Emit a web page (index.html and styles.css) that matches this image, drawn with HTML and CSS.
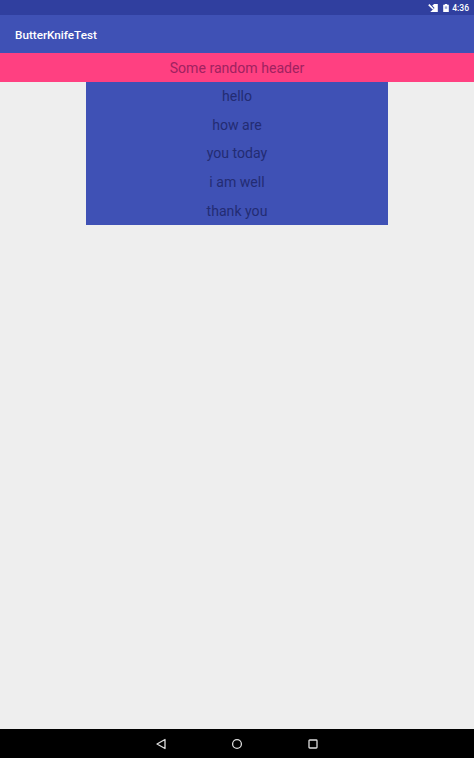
FILE: index.html
```html
<!DOCTYPE html>
<html lang="en">
<head>
    <meta charset="UTF-8">
    <meta name="viewport" content="width=device-width, initial-scale=1.0">
    <title>ButterKnifeTest</title>
    <link rel="stylesheet" href="styles.css">
</head>
<body>
    <div class="status-bar">
        <svg class="icon-signal" viewBox="0 0 12 10">
            <path d="M12 0V10H2.5L8 5L5 2L7.5 0Z" fill="#fff"/>
            <path d="M0 1.5L1.5 0L7 5.5L5.5 7Z" fill="#fff"/>
        </svg>
        <svg class="icon-battery" viewBox="0 0 7 10">
            <path d="M2 0H5V1H7V10H0V1H2Z" fill="#fff"/>
            <rect x="2" y="3" width="3" height="3" fill="#3f51b5" opacity="0.5"/>
        </svg>
        <span class="clock">4:36</span>
    </div>
    <div class="app-bar">ButterKnifeTest</div>
    <div class="header">Some random header</div>
    <main class="content">
        <ul class="list">
            <li>hello</li>
            <li>how are</li>
            <li>you today</li>
            <li>i am well</li>
            <li>thank you</li>
        </ul>
    </main>
    <div class="nav-bar">
        <svg width="12" height="12" viewBox="0 0 12 12">
            <path d="M10 1.5V10.5L2 6Z" fill="none" stroke="#ddd" stroke-width="1.3" stroke-linejoin="round"/>
        </svg>
        <svg width="12" height="12" viewBox="0 0 12 12">
            <circle cx="6" cy="6" r="4.4" fill="none" stroke="#ddd" stroke-width="1.3"/>
        </svg>
        <svg width="12" height="12" viewBox="0 0 12 12">
            <rect x="2" y="2" width="8" height="8" rx="0.8" fill="none" stroke="#ddd" stroke-width="1.3"/>
        </svg>
    </div>
</body>
</html>
```

FILE: styles.css
```css
html, body {
    height: 100%;
}

body {
    margin: 0;
    display: flex;
    flex-direction: column;
    font-family: Roboto, sans-serif;
    background-color: #eeeeee;
}

.status-bar {
    height: 15px;
    display: flex;
    align-items: center;
    justify-content: flex-end;
    padding-right: 5px;
    background-color: #303f9f;
    color: #fff;
    font-size: 8.5px;
    font-weight: 500;
}

.icon-signal {
    width: 10px;
    height: 8px;
    margin-right: 5px;
}

.icon-battery {
    width: 6px;
    height: 8px;
    margin-right: 3px;
}

.app-bar {
    height: 37px;
    padding-top: 1px;
    display: flex;
    align-items: center;
    padding-left: 15px;
    background-color: #3f51b5;
    color: #fff;
    font-size: 11.7px;
    font-weight: 500;
}

.header {
    height: 29px;
    line-height: 30px;
    text-align: center;
    background-color: #ff4081;
    color: #a02260;
    font-size: 14.1px;
}

.content {
    flex: 1;
}

.list {
    width: 302.5px;
    margin: 0 auto;
    padding: 0.3px 0 0;
    list-style: none;
    background-color: #3f51b5;
}

.list li {
    height: 28.6px;
    line-height: 29px;
    text-align: center;
    color: #232c73;
    font-size: 14.1px;
}

.nav-bar {
    height: 29px;
    display: flex;
    align-items: center;
    justify-content: center;
    gap: 64px;
    background-color: #000;
}
```
